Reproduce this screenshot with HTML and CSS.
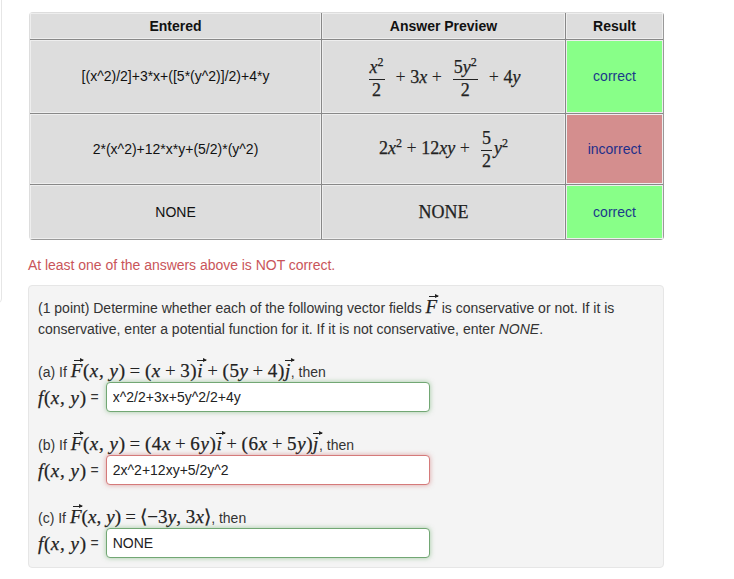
FILE: index.html
```html
<!DOCTYPE html>
<html lang="en">
<head>
  <meta charset="UTF-8" />
  <title>Problem</title>
  <link rel="stylesheet" href="styles.css">
</head>
<body>
  <div class="side-edge"></div>

  <div class="results">
    <table class="attempts">
      <tr>
        <th class="col-entered">Entered</th>
        <th class="col-preview">Answer Preview</th>
        <th class="col-result">Result</th>
      </tr>
      <tr class="row-a">
        <td>[(x^2)/2]+3*x+([5*(y^2)]/2)+4*y</td>
        <td class="math big">
          <span class="frac"><span class="num"><i>x</i><sup>2</sup></span><span class="den">2</span></span>
          <span class="op">+</span>3<i>x</i><span class="op">+</span>
          <span class="frac"><span class="num">5<i>y</i><sup>2</sup></span><span class="den">2</span></span>
          <span class="op">+</span>4<i>y</i>
        </td>
        <td class="correct">correct</td>
      </tr>
      <tr class="row-b">
        <td>2*(x^2)+12*x*y+(5/2)*(y^2)</td>
        <td class="math big">
          2<i>x</i><sup>2</sup><span class="op">+</span>12<i>xy</i><span class="op">+</span>
          <span class="frac"><span class="num">5</span><span class="den">2</span></span><i>y</i><sup>2</sup>
        </td>
        <td class="incorrect">incorrect</td>
      </tr>
      <tr class="row-c">
        <td>NONE</td>
        <td class="math big">NONE</td>
        <td class="correct">correct</td>
      </tr>
    </table>
  </div>

  <p class="message">At least one of the answers above is NOT correct.</p>

  <div class="problem">
    <p class="intro">(1 point) Determine whether each of the following vector fields <span class="math"><span class="vec"><i>F</i></span></span> is conservative or not. If it is conservative, enter a potential function for it. If it is not conservative, enter <em>NONE</em>.</p>

    <div class="part">
      <div class="part-line">(a) If <span class="math"><span class="vec"><i>F</i></span>(<i>x</i>, <i>y</i>)<span class="op">=</span>(<i>x</i><span class="op">+</span>3)<span class="vec"><i>i</i></span><span class="op">+</span>(5<i>y</i><span class="op">+</span>4)<span class="vec"><i>j</i></span></span>, then</div>
      <div class="answer-line"><span class="math"><i>f</i>(<i>x</i>, <i>y</i>)</span><span class="equals">=</span><input class="answer ok" type="text" value="x^2/2+3x+5y^2/2+4y"></div>
    </div>

    <div class="part">
      <div class="part-line">(b) If <span class="math"><span class="vec"><i>F</i></span>(<i>x</i>, <i>y</i>)<span class="op">=</span>(4<i>x</i><span class="op">+</span>6<i>y</i>)<span class="vec"><i>i</i></span><span class="op">+</span>(6<i>x</i><span class="op">+</span>5<i>y</i>)<span class="vec"><i>j</i></span></span>, then</div>
      <div class="answer-line"><span class="math"><i>f</i>(<i>x</i>, <i>y</i>)</span><span class="equals">=</span><input class="answer bad" type="text" value="2x^2+12xy+5/2y^2"></div>
    </div>

    <div class="part">
      <div class="part-line">(c) If <span class="math tight"><span class="vec"><i>F</i></span>(<i>x</i>, <i>y</i>)<span class="op">=</span>⟨−3<i>y</i>, 3<i>x</i>⟩</span>, then</div>
      <div class="answer-line"><span class="math"><i>f</i>(<i>x</i>, <i>y</i>)</span><span class="equals">=</span><input class="answer ok" type="text" value="NONE"></div>
    </div>
  </div>
</body>
</html>
```

FILE: styles.css
```css
body {
  margin: 0;
  padding: 12px 0 0 28px;
  width: 637px;
  background: #fff;
  font-family: "Liberation Sans", Arial, sans-serif;
  font-size: 14px;
  line-height: 21px;
  color: #333;
  position: relative;
  overflow: hidden;
}

/* Edge of the neighbouring column, cut off by the window */
.side-edge {
  position: absolute;
  left: -6px;
  top: -10px;
  width: 6px;
  height: 311px;
  background: #fff;
  border: 1px solid #e6e6e6;
  border-radius: 4px;
}

.results {
  padding-left: 1px;
}

/* Results table */
.attempts {
  width: 635px;
  table-layout: fixed;
  border-collapse: separate;
  border-spacing: 0;
  border: 1px solid #ddd;
  border-right-color: #999;
  border-bottom-color: #999;
  border-radius: 4px;
  color: #111;
}

.attempts th,
.attempts td {
  background: #ddd;
  text-align: center;
  padding: 0;
  border-left: 1px solid #888;
  border-top: 1px solid #888;
  box-shadow: inset 0 0 0 1px #eee;
}

.attempts th {
  height: 26px;
  border-top: 0;
  font-weight: bold;
}

.attempts th:first-child,
.attempts td:first-child {
  border-left: 0;
}

.col-entered { width: 291px; }
.col-preview { width: 243px; }

.row-a td { height: 73px; }
.row-b td { height: 70px; }
.row-c td { height: 54px; }

/* Typeset math sits a little below the cell's middle */
.row-a td.math {
  height: 69px;
  padding-top: 4px;
}

.row-b td.math {
  height: 68px;
  padding-top: 2px;
}

.attempts td.correct {
  background: #8f8;
  color: #1a3a8a;
}

.attempts td.incorrect {
  background: #d48e8e;
  color: #1f2f8a;
}

.message {
  margin: 15px 0 9px;
  color: #c9555a;
  letter-spacing: -0.03px;
}

/* Problem text */
.problem {
  width: 615px;
  height: 260px;
  padding: 12px 10px 9px 9px;
  background: #f4f4f4;
  border: 1px solid #e6e6e6;
  border-radius: 4px;
}

.intro {
  margin: 0 0 22px;
}

.part {
  height: 73px;
}

.part-line {
  height: 21px;
  line-height: 21px;
  white-space: nowrap;
}

/* Inline math must not push the text line down */
.part-line .math,
.intro .math {
  line-height: 0;
}

.answer-line {
  height: 30px;
  margin-top: -1px;
  display: flex;
  align-items: center;
}

.equals {
  margin: 0 7px 0 4px;
}

.answer {
  width: 324px;
  height: 30px;
  box-sizing: border-box;
  padding: 4px 6px;
  margin: 0;
  border-radius: 4px;
  border: 1px solid #72a774;
  background: #fff;
  font-family: "Liberation Sans", Arial, sans-serif;
  font-size: 14px;
  color: #222;
  outline: none;
}

.answer.ok {
  box-shadow: 0 0 5px rgba(80, 160, 80, 0.5);
}

.answer.bad {
  border-color: #d57a7a;
  box-shadow: 0 0 5px rgba(200, 80, 80, 0.5);
}

/* Math */
.math {
  font-family: "Liberation Serif", "Times New Roman", serif;
  font-size: 19px;
  letter-spacing: 0.6px;
  color: #222;
  -webkit-text-stroke: 0.25px #222;
}

.math.tight {
  letter-spacing: 0.1px;
}

.math.big {
  font-size: 18px;
  letter-spacing: 0;
}

.math sup {
  font-size: 12px;
  line-height: 0;
}

.op {
  margin: 0 4px;
  -webkit-text-stroke: 0;
}

.big .op {
  margin: 0 4.5px;
}

.frac {
  display: inline-flex;
  flex-direction: column;
  align-items: center;
  vertical-align: middle;
  line-height: 21px;
  margin: 0 2px;
}

.num {
  padding: 0 1px 1px;
  border-bottom: 1px solid #222;
}

.vec {
  position: relative;
  display: inline-block;
  line-height: 18px;
}

.vec::before {
  content: "";
  position: absolute;
  left: 50%;
  top: -2px;
  width: 9px;
  height: 1px;
  margin-left: -3px;
  background: #222;
}

.vec::after {
  content: "";
  position: absolute;
  left: 50%;
  top: -4px;
  margin-left: 3px;
  border-left: 4px solid #222;
  border-top: 2.5px solid transparent;
  border-bottom: 2.5px solid transparent;
}
```
